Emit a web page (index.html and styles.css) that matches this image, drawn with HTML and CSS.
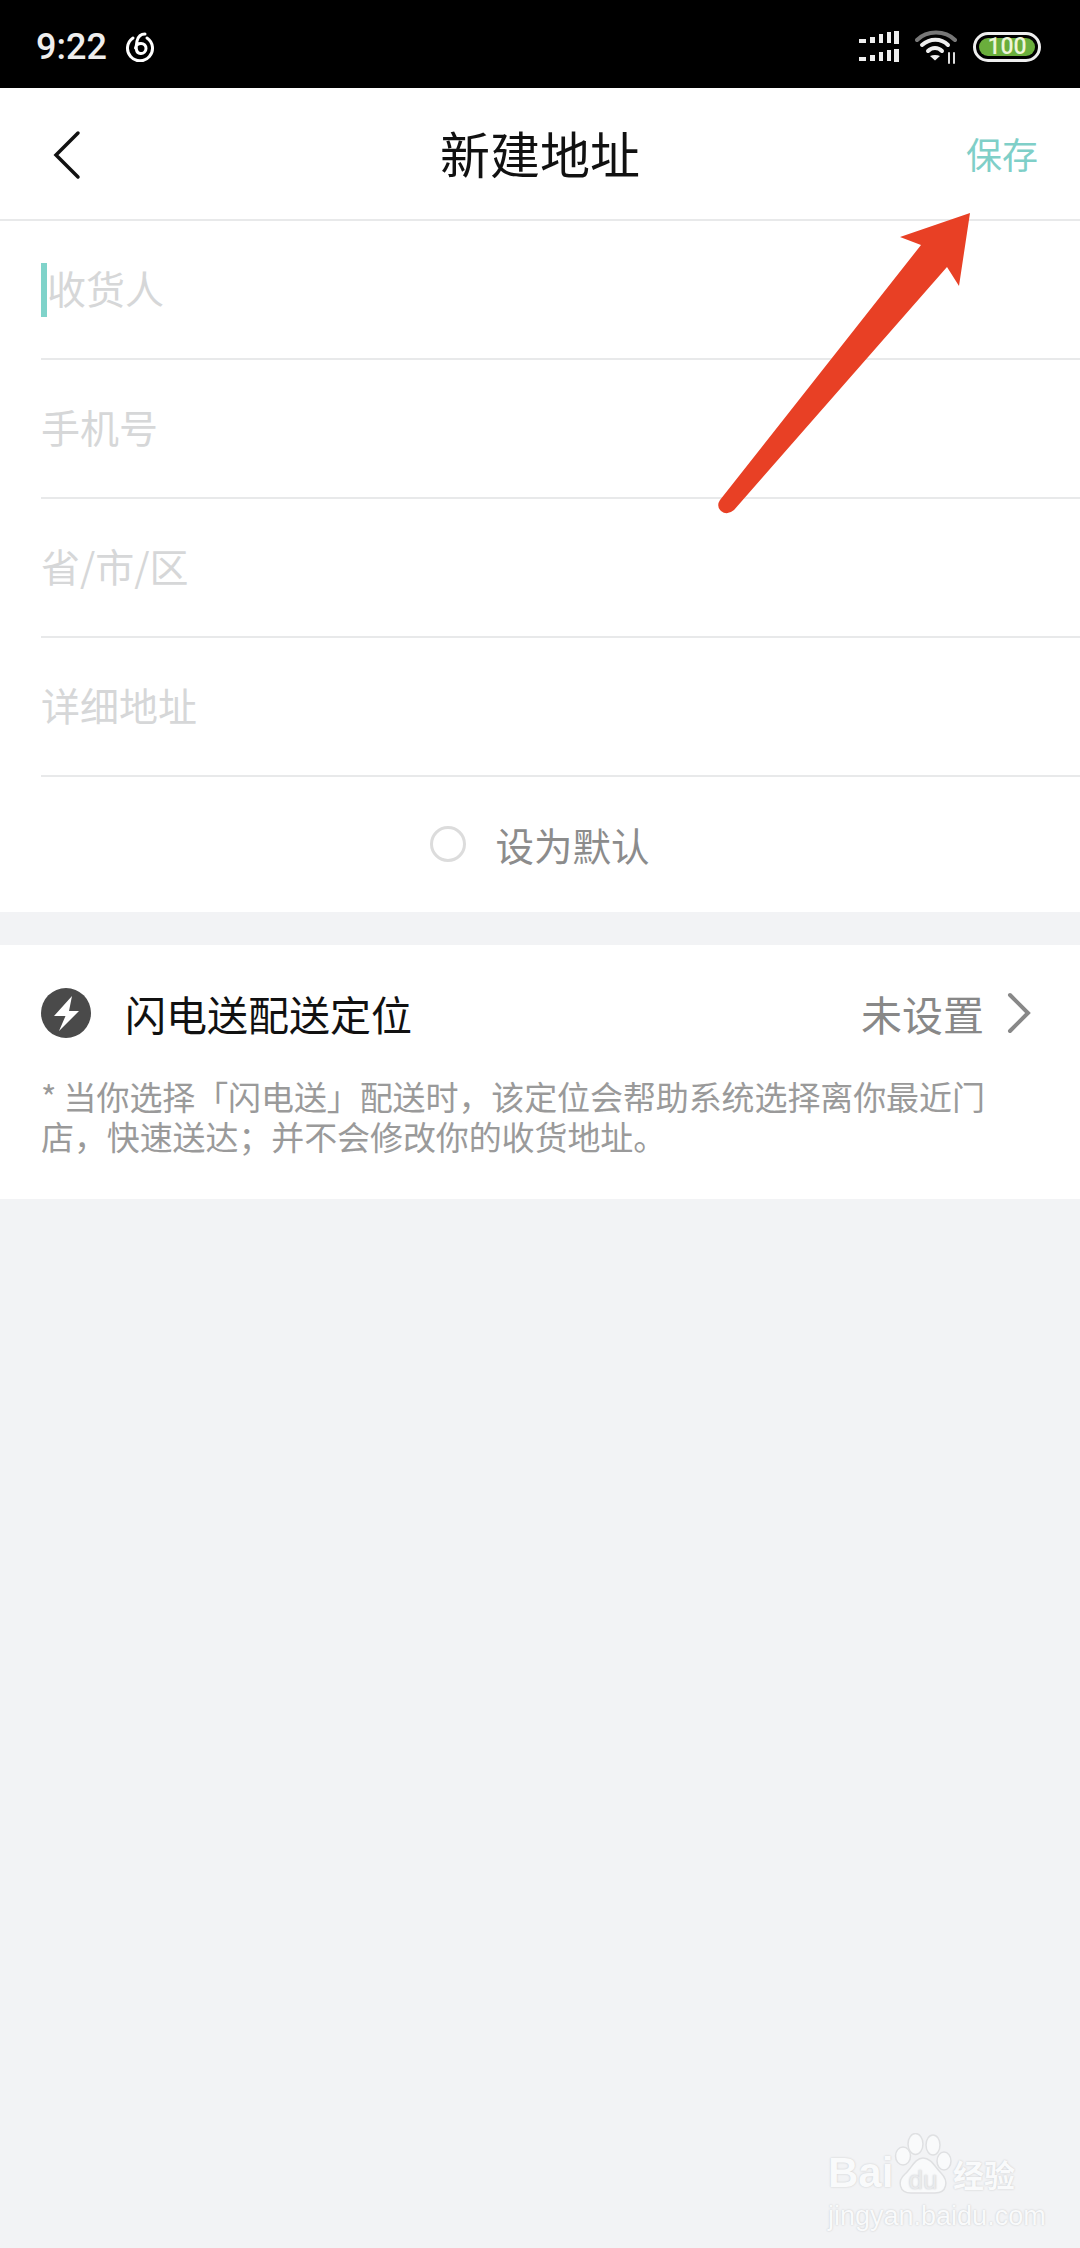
FILE: index.html
```html
<!DOCTYPE html>
<html lang="zh-CN">
<head>
  <meta charset="UTF-8">
  <meta name="viewport" content="width=device-width, initial-scale=1.0">
  <title>新建地址</title>
  <link rel="stylesheet" href="styles.css">
</head>
<body>
  <div class="page">
    <div class="status-bar">
      <div class="status-left">
        <span class="time">9:22</span>
        <svg class="netease" viewBox="0 0 30 30" width="30" height="30" fill="none" stroke="#fff" stroke-width="3" stroke-linecap="round">
          <path d="M8 6a12.500 12.500 0 1 0 14 0"/>
          <path d="M20 2c-4 0-7 3-8 7-1 5-2 12 3.500 12.500 3 .3 5.500-2 5.500-5s-2-5-5-5-5 2-5.500 4.500"/>
        </svg>
      </div>
      <div class="status-right">
        <svg viewBox="0 0 40 32" width="40" height="32" fill="#eee">
          <rect x="0" y="8" width="7" height="4"/><rect x="11" y="6" width="5" height="6"/><rect x="20" y="3" width="4" height="9"/><rect x="28" y="1" width="4" height="11"/><rect x="35" y="0" width="5" height="13"/>
          <rect x="0" y="26" width="7" height="4"/><rect x="11" y="24" width="5" height="6"/><rect x="20" y="21" width="4" height="9"/><rect x="28" y="19" width="4" height="11"/><rect x="35" y="18" width="5" height="13"/>
        </svg>
        <svg class="wifi" viewBox="0 0 42 34" width="42" height="34" fill="none" stroke-linecap="round">
          <path d="M2 10C12 0 30 0 40 10" stroke="#777" stroke-width="4"/>
          <path d="M7 15C15 8 26 8 33 15" stroke="#eee" stroke-width="4"/>
          <path d="M13 21C17 17 23 17 27 21" stroke="#eee" stroke-width="4"/>
          <path d="M15 26l5 4.500 5-4.500c-3-1.500-7-1.500-10 0z" fill="#eee"/>
          <path d="M34 23v10M39 23v10" stroke="#ddd" stroke-width="2"/>
        </svg>
        <div class="battery"><span>100</span></div>
      </div>
    </div>

    <div class="nav-bar">
      <svg class="back" viewBox="0 0 30 50" width="30" height="50" fill="none" stroke="#111" stroke-width="3.500" stroke-linecap="round">
        <path d="M26 3L4 25l22 22"/>
      </svg>
      <h1 class="title">新建地址</h1>
      <span class="save">保存</span>
    </div>

    <form class="form-card">
      <div class="field field-active"><span class="cursor"></span>收货人</div>
      <div class="field">手机号</div>
      <div class="field">省/市/区</div>
      <div class="field">详细地址</div>
      <div class="default-row">
        <span class="radio"></span>
        <span>设为默认</span>
      </div>
    </form>

    <div class="flash-card">
      <div class="flash-row">
        <svg class="flash-icon" viewBox="0 0 50 50" width="50" height="50">
          <circle cx="25" cy="25" r="25" fill="#4a4a4a"/>
          <path d="M31 8L13 28h11.500L18 43l20-20H28z" fill="#fff"/>
        </svg>
        <span class="flash-name">闪电送配送定位</span>
        <span class="flash-value">未设置</span>
        <svg class="chevron" viewBox="0 0 26 42" width="26" height="42" fill="none" stroke="#888" stroke-width="4" stroke-linecap="round">
          <path d="M4 3l18 18L4 39"/>
        </svg>
      </div>
      <p class="flash-note">* 当你选择「闪电送」配送时，该定位会帮助系统选择离你最近门店，快速送达；并不会修改你的收货地址。</p>
    </div>

    <svg class="arrow" viewBox="0 0 1080 600" width="1080" height="600">
      <path d="M970 213L959 286L947 267L734 510Q727 516 721 511Q716 506 720 500L921 245L900 237Z" fill="#e84025"/>
    </svg>

    <div class="watermark">
      <div class="wm-main">
        <span class="wm-bai">Bai</span>
        <svg class="paw" viewBox="0 0 60 63" width="60" height="63">
          <g fill="#f9fafb" stroke="#dfe0e2" stroke-width="1.500">
            <ellipse cx="10" cy="23" rx="7.500" ry="9"/>
            <ellipse cx="22.500" cy="11" rx="7.500" ry="10.500"/>
            <ellipse cx="40" cy="12" rx="7" ry="10"/>
            <ellipse cx="51" cy="28" rx="7" ry="9"/>
            <path d="M30 25C38 25 42 34 48 40C56 48 54 60 42 60H18C6 60 4 48 12 41C18 36 22 25 30 25Z"/>
          </g>
          <text class="wm-du" x="30" y="56" text-anchor="middle">du</text>
        </svg>
        <span class="wm-cn">经验</span>
      </div>
      <div class="wm-url">jingyan.baidu.com</div>
    </div>
  </div>
</body>
</html>
```

FILE: styles.css
```css
* {
  box-sizing: border-box;
}
body {
  margin: 0;
  background-color: #f2f3f5;
  font-family: "Noto Sans CJK SC", "Noto Sans", sans-serif;
}
.page {
  position: relative;
  width: 1080px;
  height: 2248px;
  overflow: hidden;
  background-color: #f2f3f5;
}

/* status bar */
.status-bar {
  height: 88px;
  background-color: #000;
  display: flex;
  justify-content: space-between;
  align-items: center;
  padding: 6px 39px 0 36px;
}
.status-left {
  display: flex;
  align-items: center;
  gap: 18px;
}
.time {
  font-family: Roboto, sans-serif;
  font-size: 36px;
  font-weight: 500;
  color: #eee;
}
.status-right {
  display: flex;
  align-items: center;
  gap: 16px;
}
.battery {
  width: 68px;
  height: 30px;
  border: 3px solid #eee;
  border-radius: 15px;
  padding: 3px;
  display: flex;
}
.battery span {
  flex: 1;
  background-color: #6aae3c;
  border-radius: 10px;
  color: #eef5d8;
  font-family: Roboto, sans-serif;
  font-size: 23px;
  font-weight: 500;
  line-height: 18px;
  text-align: center;
}

/* nav */
.nav-bar {
  height: 133px;
  background-color: #fff;
  border-bottom: 2px solid #e8e9ea;
  display: grid;
  grid-template-columns: 1fr auto 1fr;
  align-items: center;
  padding: 0 42px;
}
.back {
  margin: 2px 0 0 10px;
}
.title {
  margin: 0 0 4px;
  font-size: 50px;
  font-weight: 400;
  color: #111;
}
.save {
  justify-self: end;
  margin-bottom: 2px;
  font-size: 36px;
  color: #7fcfc8;
}

/* form */
.form-card {
  background-color: #fff;
  padding-left: 41px;
}
.field {
  height: 139px;
  padding-bottom: 5px;
  border-bottom: 2px solid #e8e9ea;
  display: flex;
  align-items: center;
  font-size: 39px;
  color: #d6d7d8;
}
.field-active {
  position: relative;
  padding-left: 6px;
}
.cursor {
  position: absolute;
  left: 0;
  top: 42px;
  width: 6px;
  height: 54px;
  background-color: #7fd3ca;
}
.default-row {
  height: 135px;
  padding-bottom: 2px;
  margin-left: -41px;
  display: flex;
  align-items: center;
  justify-content: center;
  gap: 29px;
  font-size: 38.500px;
  color: #8c8c8c;
}
.radio {
  width: 36px;
  height: 36px;
  border: 3px solid #dcdcdc;
  border-radius: 50%;
}

/* flash delivery */
.flash-card {
  margin-top: 33px;
  height: 254px;
  background-color: #fff;
  padding: 38px 48px 0 41px;
}
.flash-row {
  display: flex;
  align-items: center;
}
.flash-name {
  margin-left: 34px;
  font-size: 41px;
  color: #111;
  flex: 1;
}
.flash-value {
  font-size: 41px;
  color: #888;
}
.chevron {
  margin-left: 22px;
}
.flash-note {
  margin: 33px 0 0;
  width: 960px;
  font-size: 33px;
  letter-spacing: -0.100px;
  line-height: 40px;
  color: #9a9a9a;
}

/* overlays */
.arrow {
  position: absolute;
  left: 0;
  top: 0;
}
.watermark {
  position: absolute;
  left: 828px;
  top: 2133px;
  width: 200px;
  color: #f9fafb;
  text-shadow: 0 0 2px #c4c5c7;
}
.wm-main {
  display: flex;
  align-items: flex-end;
  height: 63px;
  white-space: nowrap;
}
.wm-bai {
  font-family: "Liberation Sans", sans-serif;
  font-size: 42px;
  font-weight: 700;
  line-height: 46px;
  width: 65px;
}
.paw {
  flex: none;
}
.wm-du {
  font-family: "Liberation Sans", sans-serif;
  font-size: 26px;
  fill: #e9eaec;
}
.wm-cn {
  font-size: 31px;
  line-height: 44px;
  font-weight: 700;
}
.wm-url {
  margin-top: 5px;
  font-family: "Liberation Sans", sans-serif;
  font-size: 27px;
  line-height: 30px;
  white-space: nowrap;
}
```
